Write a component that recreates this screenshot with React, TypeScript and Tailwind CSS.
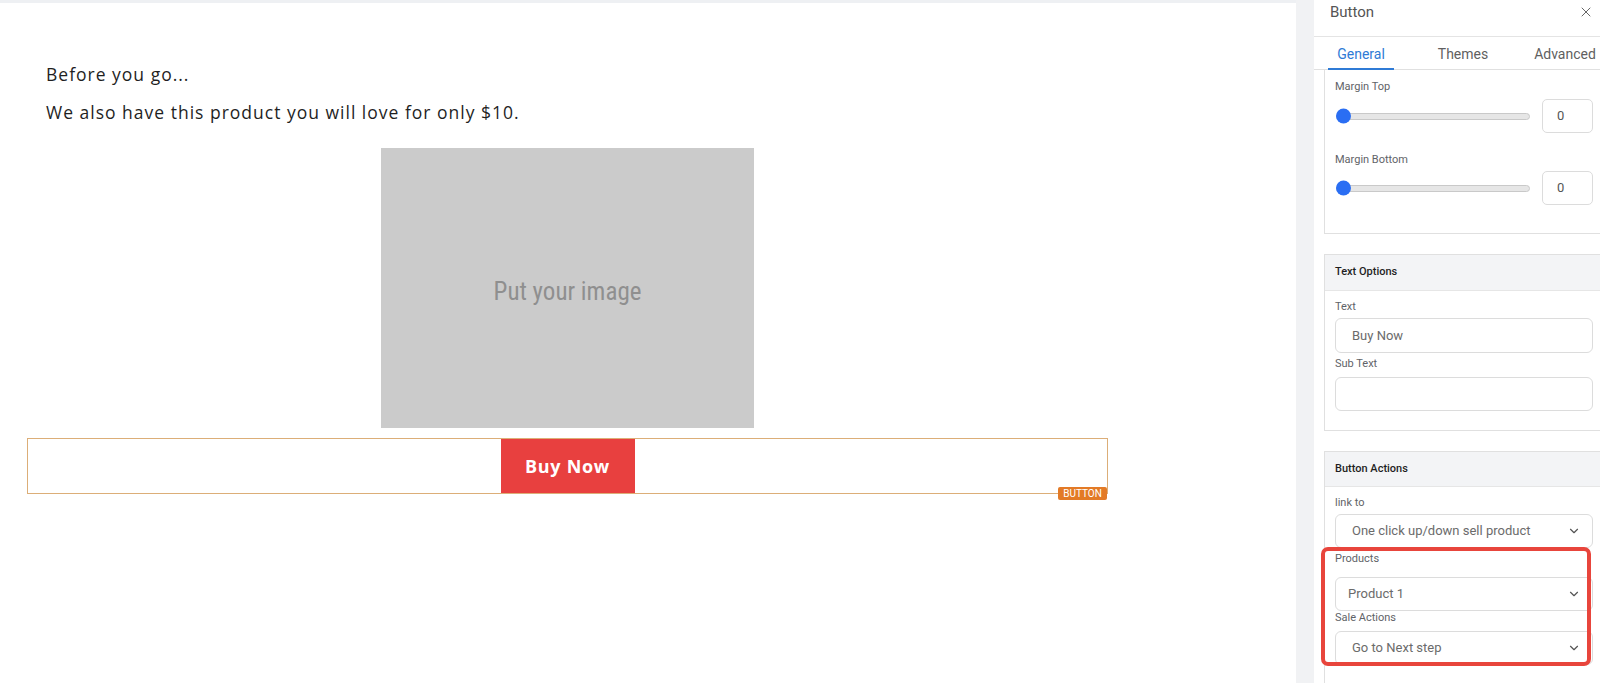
import React from "react";
import { X, ChevronDown } from "lucide-react";

const panelFont = { fontFamily: "Roboto, 'Liberation Sans', sans-serif" };

function Slider() {
  return (
    <div className="flex items-center h-[34px]">
      <div className="relative w-[194px] h-[7px] ml-[1px] rounded-full bg-[#e6e6e6] border border-[#c9c9c9]">
        <div className="absolute left-[-1px] top-1/2 -translate-y-1/2 w-[15px] h-[15px] rounded-full bg-[#2a6ef3]" />
      </div>
      <div className="ml-[12px] w-[51px] h-[34px] rounded-[5px] border border-[#dcdcdc] flex items-center pl-[14px] text-[13px] text-[#555]">
        0
      </div>
    </div>
  );
}

function Label({ children }: { children: React.ReactNode }) {
  return <div className="text-[11px] leading-[16px] text-[#5f6368]">{children}</div>;
}

function Select({ text, pl = "pl-[16px]" }: { text: string; pl?: string }) {
  return (
    <div className={`w-[258px] h-[34px] rounded-[6px] border border-[#dcdcdc] flex items-center justify-between ${pl} pr-[11px] text-[13px] text-[#6b6b6b]`}>
      <span>{text}</span>
      <ChevronDown size={14} strokeWidth={2} className="text-[#555]" />
    </div>
  );
}

export default function App() {
  return (
    <div className="w-[1600px] h-[683px] flex overflow-hidden bg-white">
      {/* Canvas */}
      <div className="w-[1296px] shrink-0 h-full border-t-[3px] border-[#eef0f3] bg-white pl-[27px]">
        <div className="w-[1081px]">
          <div
            className="pl-[19px] pt-[57px] text-[17.5px] leading-[28px] tracking-[1px] text-[#1f1f1f]"
            style={{ fontFamily: "'Open Sans', 'Liberation Sans', sans-serif" }}
          >
            <p>Before you go...</p>
            <p className="mt-[10px]">We also have this product you will love for only $10.</p>
          </div>
          <div className="mx-auto mt-[22px] w-[373px] h-[280px] bg-[#cbcbcb] flex items-center justify-center pt-[8px]">
            <span
              className="text-[25px] text-[#8f8f8f]"
              style={{ fontFamily: "'Liberation Sans Narrow', 'Roboto Condensed', Roboto, sans-serif" }}
            >
              Put your image
            </span>
          </div>
          <div className="relative mt-[10px] h-[56px] border border-[#dcae78] flex justify-center">
            <div
              className="w-[134px] h-full bg-[#e8403f] flex items-center justify-center text-white font-bold text-[18px] tracking-[0.7px]"
              style={{ fontFamily: "'Open Sans', 'Liberation Sans', sans-serif" }}
            >
              Buy Now
            </div>
            <div
              className="absolute right-[0px] bottom-[-7px] w-[49px] h-[13px] bg-[#e37a26] rounded-[2px] text-white text-[10px] leading-[13px] text-center"
              style={{ fontFamily: "'Liberation Sans Narrow', Roboto, sans-serif" }}
            >
              BUTTON
            </div>
          </div>
        </div>
      </div>

      {/* Gutter */}
      <div className="w-[18px] shrink-0 h-full bg-[#f1f2f4]" />

      {/* Panel */}
      <div className="relative w-[286px] shrink-0 h-full overflow-hidden bg-white" style={panelFont}>
        <div className="h-[37px] border-b border-[#e4e4e4] flex items-start justify-between pl-[16px] pr-[6px] pt-[3px]">
          <span className="text-[15px] leading-[18px] text-[#555]">Button</span>
          <X size={16} strokeWidth={1.5} className="text-[#666] mt-[1px]" />
        </div>
        <div className="h-[33px] border-b border-[#e0e0e0] flex -ml-[4px] text-[14px] pt-[2px]">
          <div className="relative w-[102px] shrink-0 flex items-center justify-center text-[#2f7bd6]">
            General
            <div className="absolute bottom-[-1px] left-[18px] w-[66px] h-[2px] bg-[#2f7bd6]" />
          </div>
          <div className="w-[102px] shrink-0 flex items-center justify-center text-[#5f5f5f]">Themes</div>
          <div className="w-[102px] shrink-0 flex items-center justify-center text-[#5f5f5f]">Advanced</div>
        </div>

        <div className="pl-[10px]">
          {/* Card 1 (scrolled) */}
          <div className="w-[300px] border-l border-r border-b border-[#e0e0e0] pl-[10px] pt-[9px] pb-[28px]">
            <Label>Margin Top</Label>
            <div className="mt-[4px]">
              <Slider />
            </div>
            <div className="mt-[19px]">
              <Label>Margin Bottom</Label>
            </div>
            <div className="mt-[3px]">
              <Slider />
            </div>
          </div>

          {/* Card 2 */}
          <div className="mt-[20px] w-[300px] border border-[#e0e0e0]">
            <div className="h-[36px] bg-[#f3f4f6] border-b border-[#e6e6e6] flex items-center pl-[10px] text-[11px] font-medium text-[#1f1f1f]">
              Text Options
            </div>
            <div className="pl-[10px] pt-[8px] pb-[19px]">
              <Label>Text</Label>
              <div className="mt-[3px] w-[258px] h-[35px] rounded-[6px] border border-[#dcdcdc] flex items-center pl-[16px] text-[13px] text-[#6b6b6b]">
                Buy Now
              </div>
              <div className="mt-[3px]">
                <Label>Sub Text</Label>
              </div>
              <div className="mt-[5px] w-[258px] h-[34px] rounded-[6px] border border-[#dcdcdc]" />
            </div>
          </div>

          {/* Card 3 */}
          <div className="mt-[20px] w-[300px] border border-[#e0e0e0] h-[300px]">
            <div className="h-[35px] bg-[#f3f4f6] border-b border-[#e6e6e6] flex items-center pl-[10px] text-[11px] font-medium text-[#1f1f1f]">
              Button Actions
            </div>
            <div className="pl-[10px] pt-[8px]">
              <Label>link to</Label>
              <div className="mt-[3px]">
                <Select text="One click up/down sell product" />
              </div>
              <div className="mt-[3px]">
                <Label>Products</Label>
              </div>
              <div className="mt-[10px]">
                <Select text="Product 1" pl="pl-[12px]" />
              </div>
              <div className="mt-[-1px]">
                <Label>Sale Actions</Label>
              </div>
              <div className="mt-[5px]">
                <Select text="Go to Next step" />
              </div>
            </div>
          </div>
        </div>

        {/* annotation highlight */}
        <div className="absolute left-[7px] top-[547px] w-[270px] h-[119px] border-[4px] border-[#e8453c] rounded-[7px]" />
      </div>
    </div>
  );
}
